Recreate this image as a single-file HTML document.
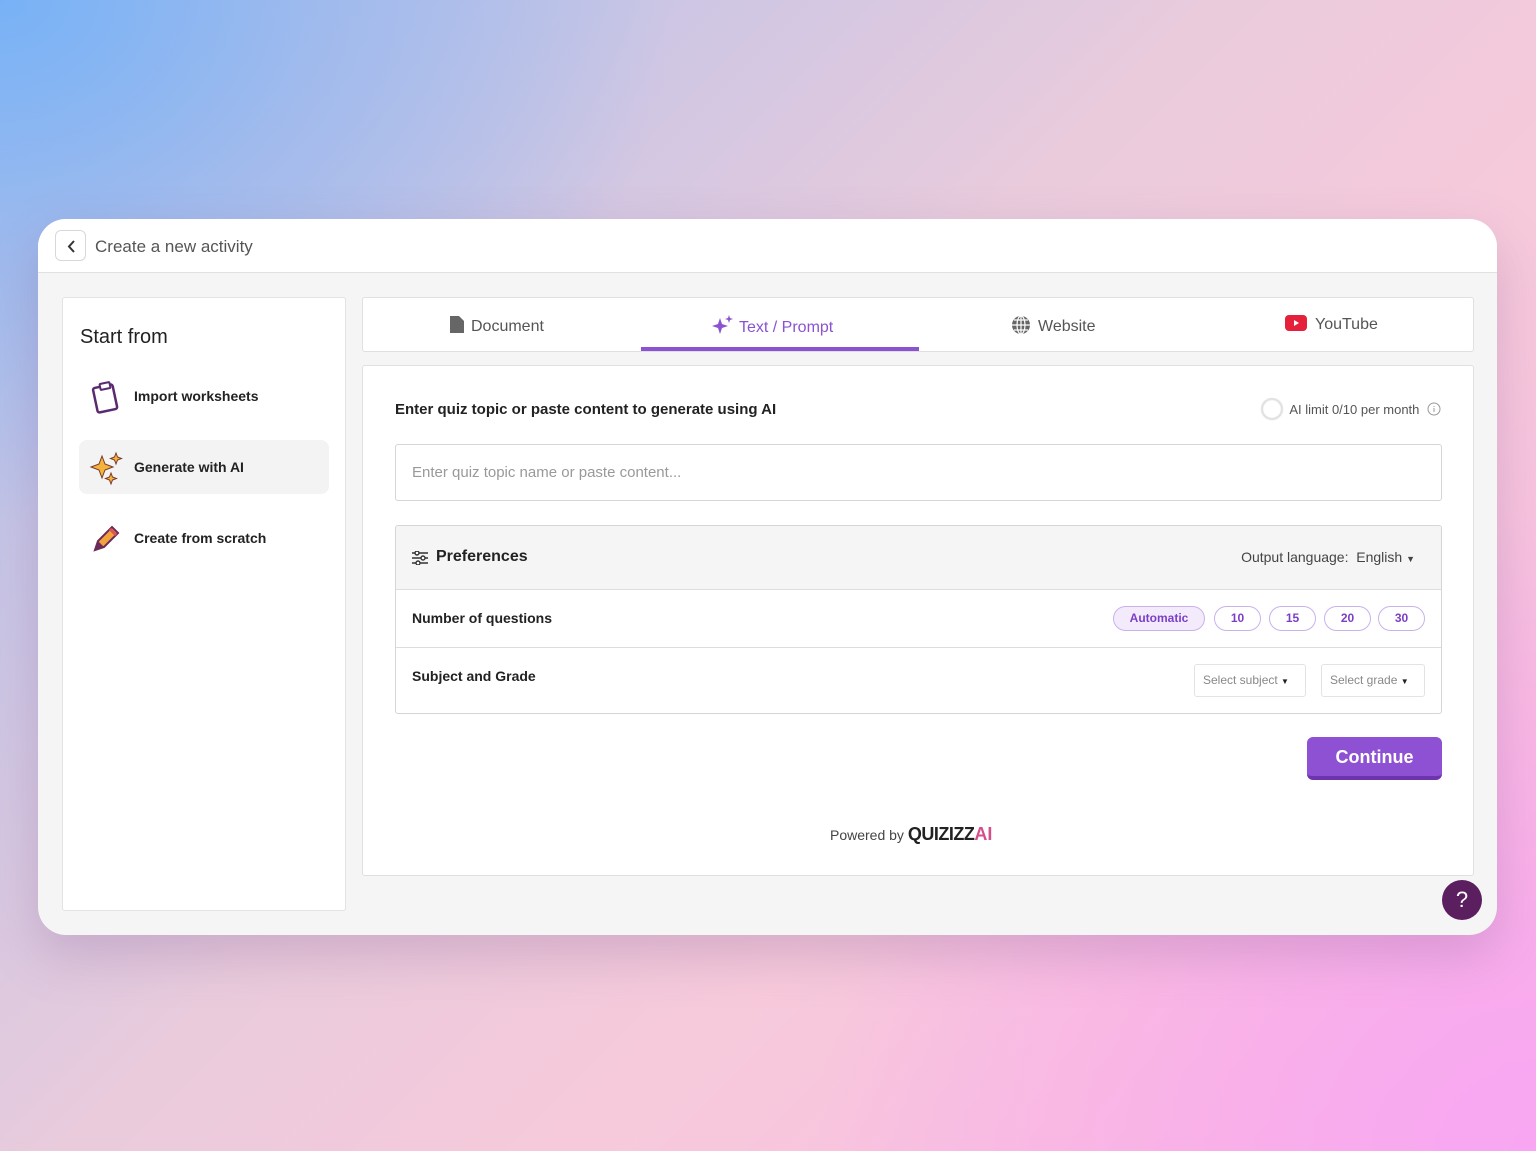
<!DOCTYPE html>
<html><head><meta charset="utf-8"><style>
*{box-sizing:border-box;margin:0;padding:0}
body{width:1536px;height:1151px;overflow:hidden;font-family:"Liberation Sans",sans-serif;position:relative;
background:
radial-gradient(ellipse 900px 700px at 0 0,#78b2f6 0%,rgba(140,180,240,0.6) 35%,rgba(200,200,230,0) 75%),
radial-gradient(ellipse 900px 800px at 1536px 1151px,#f8a6f2 0%,rgba(250,170,235,0.5) 45%,rgba(250,200,220,0) 80%),
linear-gradient(135deg,#a9c0ee 0%,#e9cbdc 45%,#f7cadb 65%,#f9b5e6 100%);}
.card{position:absolute;left:38px;top:219px;width:1459px;height:716px;border-radius:28px;background:#f5f5f5;overflow:hidden;box-shadow:0 20px 50px rgba(120,80,140,0.25)}
.hdr{height:54px;background:#fff;border-bottom:1px solid #e0e0e0;position:relative}
.back{position:absolute;left:17px;top:11px;width:31px;height:31px;border:1px solid #d8d8d8;border-radius:6px}
.hdr .t{position:absolute;left:57px;top:18px;font-size:17px;color:#555}
.left{position:absolute;left:24px;top:78px;width:284px;height:614px;background:#fff;border:1px solid #e3e3e3;border-radius:3px}
.left h2{position:absolute;left:17px;top:28px;font-size:20px;font-weight:normal;color:#222}
.item{position:absolute;left:16px;width:250px;height:54px;border-radius:8px;font-size:14px;color:#222;font-weight:bold}
.item span{position:absolute;left:55px;top:19px}
.item svg{position:absolute;left:10px;top:11px}
.tabs{position:absolute;left:324px;top:78px;width:1112px;height:55px;background:#fff;border:1px solid #e0e0e0;border-radius:3px}
.tab{position:absolute;top:17px;font-size:16px;color:#555}
.ul{position:absolute;left:278px;top:49px;width:278px;height:4px;background:#8b52d1}
.main{position:absolute;left:324px;top:146px;width:1112px;height:511px;background:#fff;border:1px solid #e0e0e0;border-radius:3px}
.q{position:absolute;left:32px;top:35px;font-size:15px;font-weight:bold;color:#222}
.lim{position:absolute;right:32px;top:31px;font-size:13px;color:#555;white-space:nowrap}
.inp{position:absolute;left:32px;top:78px;width:1047px;height:57px;border:1px solid #d5d5d5;border-radius:3px;font-size:15px;color:#999;padding:19px 16px}
.pref{position:absolute;left:32px;top:159px;width:1047px;height:189px;border:1px solid #d5d5d5;border-radius:3px;overflow:hidden}
.ph{height:64px;background:#f5f5f5;border-bottom:1px solid #ddd;position:relative}
.row{height:58px;border-bottom:1px solid #ddd;position:relative}
.lbl{position:absolute;left:16px;font-size:14px;font-weight:bold;color:#222}
.pill{position:absolute;top:16px;height:25px;border:1px solid #c9b2ea;border-radius:13px;font-size:12px;color:#7b3fc6;font-weight:bold;text-align:center;line-height:23px}
.sel{position:absolute;top:16px;height:33px;border:1px solid #e3e3e3;border-radius:3px;font-size:12px;color:#888;line-height:31px;padding-left:8px}
.btn{position:absolute;left:944px;top:371px;width:135px;height:43px;background:#8e51d4;border-bottom:4px solid #6c34ad;border-radius:6px;color:#fff;font-size:18px;font-weight:bold;text-align:center;line-height:40px}
.pw{position:absolute;left:467px;top:458px;font-size:14px;color:#444}
.help{position:absolute;left:1404px;top:661px;width:40px;height:40px;border-radius:50%;background:#5b1f5f;color:#fff;font-size:22px;text-align:center;line-height:40px}
</style></head><body>
<div class="card">
 <div class="hdr"><div class="back"><svg width="31" height="31" viewBox="0 0 31 31"><path d="M18 10l-5 5.5 5 5.5" fill="none" stroke="#333" stroke-width="2"/></svg></div><div class="t">Create a new activity</div></div>
 <div class="left">
  <h2>Start from</h2>
  <div class="item" style="top:71px"><svg width="34" height="34" viewBox="0 0 34 34"><rect x="6" y="6" width="20" height="25" rx="2" fill="#fff" stroke="#5a2a70" stroke-width="2.5" transform="rotate(-12 16 18)"/><rect x="11" y="3" width="10" height="6" rx="1" fill="#fff" stroke="#5a2a70" stroke-width="2" transform="rotate(-12 16 6)"/></svg><span>Import worksheets</span></div>
  <div class="item" style="top:142px;background:#f3f3f3"><svg width="36" height="36" viewBox="0 0 36 36"><path d="M13 5l3 8 8 3-8 3-3 8-3-8-8-3 8-3z" fill="#f3b33d" stroke="#7a3a2a" stroke-width="1"/><path d="M27 2l1.5 4 4 1.5-4 1.5-1.5 4-1.5-4-4-1.5 4-1.5z" fill="#f3b33d" stroke="#7a3a2a" stroke-width="1"/><path d="M22 22l1.5 4 4 1.5-4 1.5-1.5 4-1.5-4-4-1.5 4-1.5z" fill="#f3b33d" stroke="#7a3a2a" stroke-width="1"/></svg><span>Generate with AI</span></div>
  <div class="item" style="top:213px"><svg width="34" height="34" viewBox="0 0 34 34"><path d="M6 28l3-9 14-14 6 6-14 14z" fill="#f3a33d" stroke="#6a2a5a" stroke-width="2"/><path d="M6 28l3-9 6 6z" fill="#6a2a5a"/><path d="M21 7l6 6" stroke="#d55" stroke-width="3"/></svg><span>Create from scratch</span></div>
 </div>
 <div class="tabs">
  <div class="tab" style="left:86px"><svg width="16" height="19" viewBox="0 0 16 19" style="vertical-align:-3px;margin-right:6px"><path d="M1 1h9l5 5v12H1z" fill="#666"/></svg>Document</div>
  <div class="tab" style="left:349px;color:#8b52d1"><svg width="22" height="20" viewBox="0 0 22 20" style="vertical-align:-3px;margin-right:5px"><path d="M8 3l2 6 6 2-6 2-2 6-2-6-6-2 6-2z" fill="#8b52d1"/><path d="M17 0l1 3 3 1-3 1-1 3-1-3-3-1 3-1z" fill="#8b52d1"/></svg>Text / Prompt</div>
  <div class="tab" style="left:648px"><svg width="20" height="20" viewBox="0 0 20 20" style="vertical-align:-4px;margin-right:7px"><circle cx="10" cy="10" r="9" fill="#666"/><path d="M1 10h18M10 1v18M3 5h14M3 15h14" stroke="#fff" stroke-width="1.2"/><ellipse cx="10" cy="10" rx="4" ry="9" fill="none" stroke="#fff" stroke-width="1.2"/></svg>Website</div>
  <div class="tab" style="left:922px"><svg width="22" height="16" viewBox="0 0 22 16" style="vertical-align:-2px;margin-right:8px"><rect width="22" height="16" rx="4" fill="#e5203a"/><path d="M9 5l5 3-5 3z" fill="#fff"/></svg>YouTube</div>
  <div class="ul"></div>
 </div>
 <div class="main">
  <div class="q">Enter quiz topic or paste content to generate using AI</div>
  <div class="lim"><svg width="24" height="24" viewBox="0 0 24 24" style="vertical-align:-7px;margin-right:5px"><circle cx="12" cy="12" r="10" fill="none" stroke="#e3e3e3" stroke-width="2.5"/></svg>AI limit 0/10 per month <svg width="14" height="14" viewBox="0 0 14 14" style="vertical-align:-2px;margin-left:4px"><circle cx="7" cy="7" r="6" fill="none" stroke="#999"/><path d="M7 6v4M7 4v1" stroke="#999"/></svg></div>
  <div class="inp">Enter quiz topic name or paste content...</div>
  <div class="pref">
   <div class="ph"><svg width="16" height="14" viewBox="0 0 16 14" style="position:absolute;left:16px;top:25px"><path d="M0 2h16M0 7h16M0 12h16" stroke="#333" stroke-width="1.6"/><circle cx="5" cy="2" r="2" fill="#fff" stroke="#333" stroke-width="1.4"/><circle cx="11" cy="7" r="2" fill="#fff" stroke="#333" stroke-width="1.4"/><circle cx="6" cy="12" r="2" fill="#fff" stroke="#333" stroke-width="1.4"/></svg><div class="lbl" style="left:40px;top:22px;font-size:16px">Preferences</div><div style="position:absolute;right:26px;top:23px;font-size:14px;color:#444">Output language:&nbsp; English <span style="font-size:9px">▼</span></div></div>
   <div class="row"><div class="lbl" style="top:20px">Number of questions</div>
    <div class="pill" style="left:717px;width:92px;background:#f3ebfc">Automatic</div>
    <div class="pill" style="left:818px;width:47px">10</div>
    <div class="pill" style="left:873px;width:47px">15</div>
    <div class="pill" style="left:928px;width:47px">20</div>
    <div class="pill" style="left:982px;width:47px">30</div></div>
   <div class="row" style="border:none;height:65px"><div class="lbl" style="top:20px">Subject and Grade</div>
    <div class="sel" style="left:798px;width:112px">Select subject <span style="color:#222;font-size:8px">▼</span></div>
    <div class="sel" style="left:925px;width:104px">Select grade <span style="color:#222;font-size:8px">▼</span></div></div>
  </div>
  <div class="btn">Continue</div>
  <div class="pw">Powered by <b style="font-size:18px;color:#222;letter-spacing:-0.5px">QUIZIZZ</b><b style="font-size:18px;color:#d4508a">AI</b></div>
 </div>
 <div class="help">?</div>
</div>
</body></html>
